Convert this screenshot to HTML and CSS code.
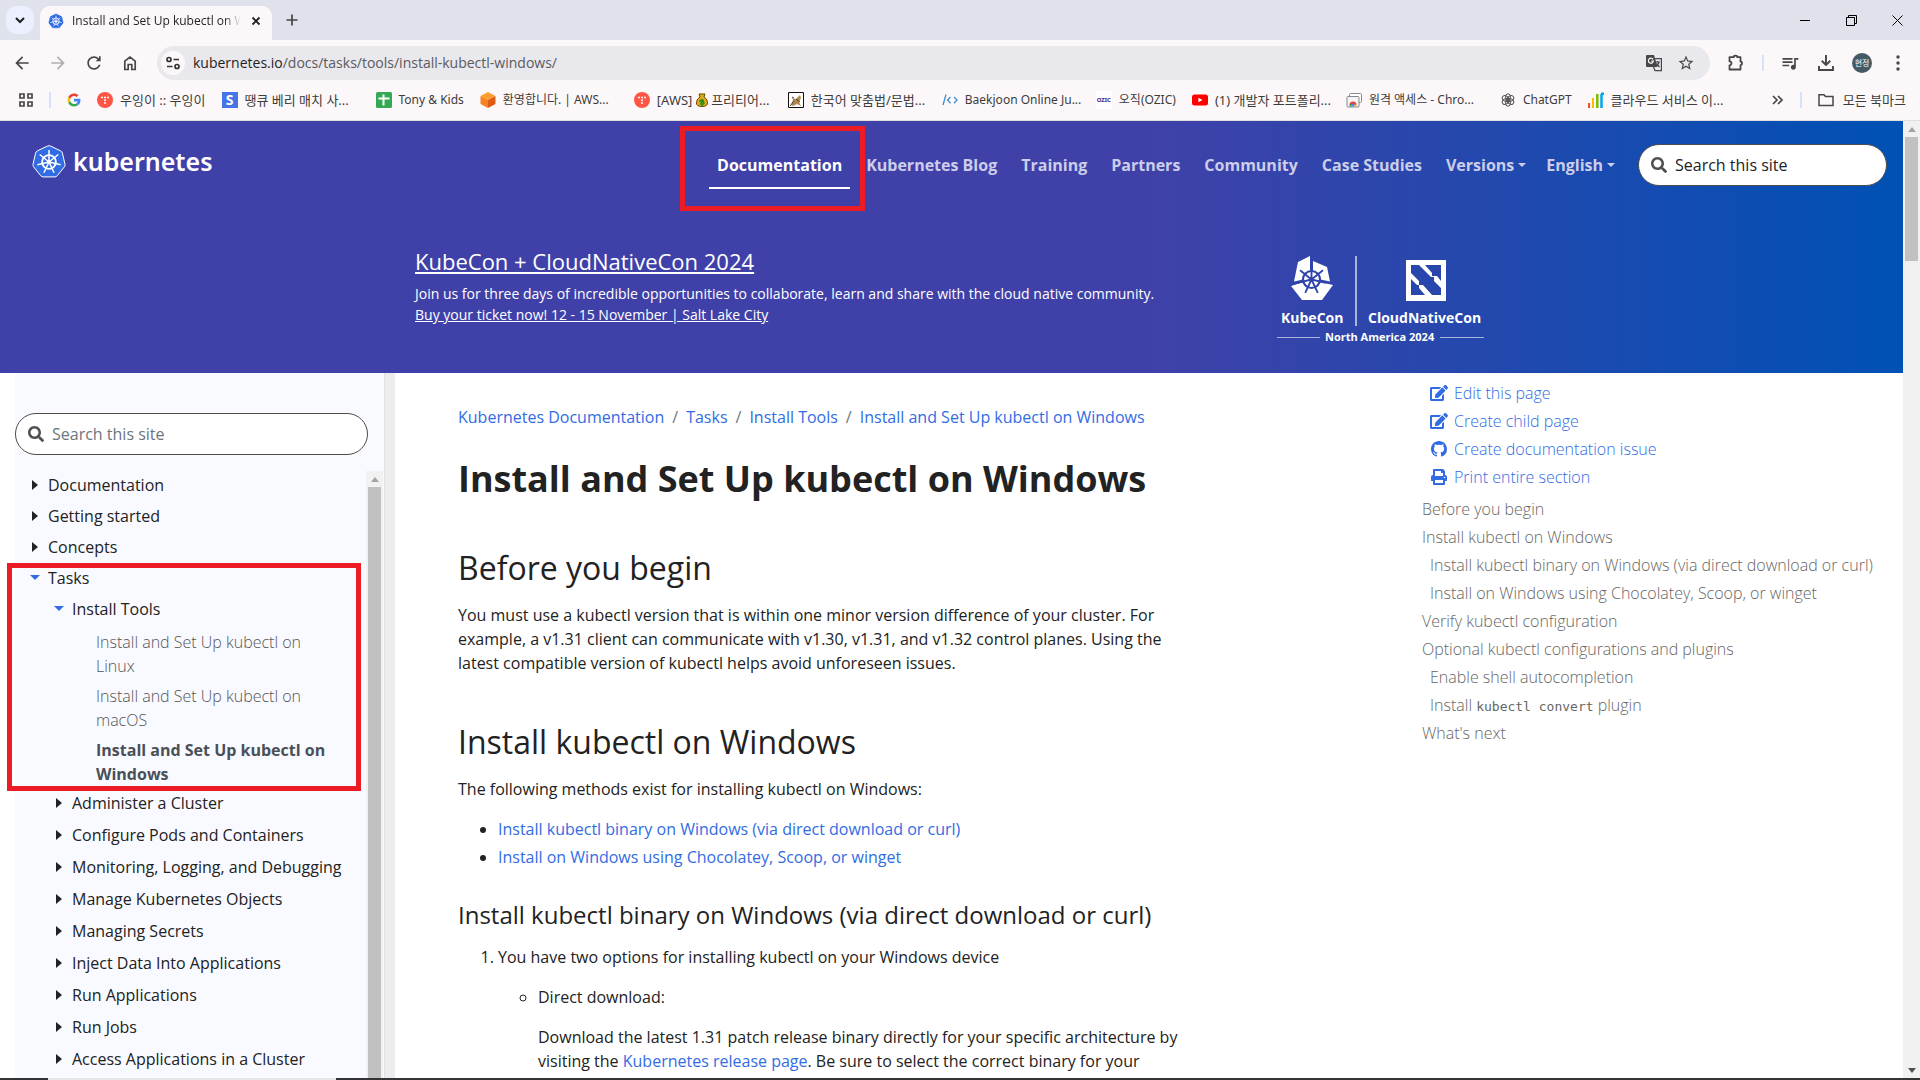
FILE: index.html
```
<!DOCTYPE html>
<html lang="en">
<head>
    <meta charset="utf-8">
    <meta name="viewport" content="width=device-width, initial-scale=1.0">
    <title>Install and Set Up kubectl on Windows</title>
    <link rel="stylesheet" href="styles.css">
</head>
<body>
    <!-- shared icons -->
    <svg class="sprite" aria-hidden="true">
        <symbol id="wheel" viewBox="-50 -50 100 100">
            <g fill="none" stroke="currentColor">
                <circle r="23" stroke-width="6"/>
                <path stroke-width="5" d="M0 0V-40M0 0L31 -25M0 0L39 9M0 0L17 36M0 0L-17 36M0 0L-39 9M0 0L-31 -25"/>
            </g>
            <circle r="6" fill="currentColor"/>
        </symbol>
        <symbol id="k8s" viewBox="0 0 34 33">
            <path fill="#326ce5" stroke="#fff" stroke-width="1" d="M15.4 1.1q1.6-.8 3.2 0L28.700 5.900q1.400.7 1.700 2.200l2.600 11.200q.3 1.400-.6 2.500l-7.100 8.900q-1 1.200-2.500 1.200H11.200q-1.500 0-2.500-1.200L1.600 21.800q-.9-1.100-.6-2.500L3.600 8.100q.3-1.500 1.700-2.200z"/>
            <use href="#wheel" x="2" y="2" width="30" height="30" color="#fff"/>
        </symbol>
        <symbol id="search" viewBox="0 0 512 512">
            <path fill="currentColor" d="M505 442.700L405.300 343c-4.500-4.500-10.600-7-17-7H372c27.600-35.300 44-79.700 44-128C416 93.100 322.900 0 208 0S0 93.100 0 208s93.100 208 208 208c48.300 0 92.700-16.400 128-44v16.300c0 6.400 2.500 12.500 7 17l99.700 99.700c9.400 9.400 24.600 9.400 33.900 0l28.300-28.300c9.400-9.400 9.400-24.600.1-34zM208 336c-70.700 0-128-57.200-128-128 0-70.700 57.200-128 128-128 70.700 0 128 57.200 128 128 0 70.700-57.200 128-128 128z"/>
        </symbol>
        <symbol id="edit" viewBox="0 0 576 512">
            <path fill="currentColor" d="M402.600 83.200l90.200 90.200c3.800 3.800 3.800 10 0 13.800L274.400 405.600l-92.800 10.300c-12.400 1.400-22.900-9.100-21.500-21.500l10.300-92.800L388.800 83.200c3.800-3.800 10-3.800 13.800 0zm162-22.900l-48.800-48.800c-15.200-15.200-39.900-15.200-55.200 0l-35.400 35.400c-3.800 3.800-3.800 10 0 13.800l90.200 90.200c3.800 3.800 10 3.800 13.800 0l35.400-35.400c15.200-15.300 15.200-40 0-55.200zM384 346.200V448H64V128h229.800c3.200 0 6.200-1.300 8.500-3.500l40-40c7.600-7.600 2.200-20.500-8.500-20.500H48C21.500 64 0 85.500 0 112v352c0 26.500 21.500 48 48 48h352c26.500 0 48-21.500 48-48V306.200c0-10.700-12.900-16-20.500-8.500l-40 40c-2.200 2.300-3.500 5.300-3.500 8.500z"/>
        </symbol>
        <symbol id="github" viewBox="0 0 16 16">
            <path fill="currentColor" d="M8 0C3.580 0 0 3.580 0 8c0 3.540 2.290 6.530 5.470 7.590.4.07.55-.17.55-.38 0-.19-.01-.82-.01-1.490-2.010.37-2.530-.49-2.690-.94-.09-.23-.48-.94-.82-1.130-.28-.15-.68-.52-.01-.53.63-.01 1.080.58 1.230.82.72 1.210 1.870.87 2.330.66.07-.52.28-.87.51-1.070-1.780-.2-3.640-.89-3.640-3.950 0-.87.31-1.590.82-2.150-.08-.2-.36-1.020.08-2.120 0 0 .67-.21 2.200.82.64-.18 1.320-.27 2-.27s1.360.09 2 .27c1.530-1.040 2.200-.82 2.200-.82.44 1.100.16 1.920.08 2.120.51.56.82 1.270.82 2.150 0 3.070-1.870 3.750-3.650 3.950.29.25.54.73.54 1.480 0 1.070-.01 1.930-.01 2.200 0 .21.15.46.55.38A8.010 8.010 0 0 0 16 8c0-4.420-3.580-8-8-8z"/>
        </symbol>
        <symbol id="print" viewBox="0 0 512 512">
            <path fill="currentColor" d="M448 192V77.250c0-8.490-3.370-16.620-9.370-22.630L393.370 9.370c-6-6-14.140-9.370-22.630-9.370H96C78.330 0 64 14.330 64 32v160c-35.350 0-64 28.650-64 64v112c0 8.840 7.160 16 16 16h48v96c0 17.670 14.330 32 32 32h320c17.670 0 32-14.330 32-32v-96h48c8.840 0 16-7.160 16-16V256c0-35.350-28.650-64-64-64zm-64 256H128v-96h256v96zm0-224H128V64h192v48c0 8.840 7.160 16 16 16h48v96zm48 72c-13.250 0-24-10.750-24-24 0-13.260 10.750-24 24-24s24 10.740 24 24c0 13.250-10.750 24-24 24z"/>
        </symbol>
        <symbol id="tistory" viewBox="0 0 16 16">
            <circle cx="8" cy="8" r="8" fill="#ff5544"/>
            <g fill="#fff"><circle cx="5" cy="5.500" r="1"/><circle cx="8" cy="5.500" r="1"/><circle cx="11" cy="5.500" r="1"/><circle cx="8" cy="8.300" r="1"/><circle cx="8" cy="11" r="1"/></g>
        </symbol>
    </svg>

    <!-- tab strip -->
    <div class="tabstrip">
        <button class="tab-search" aria-label="Search tabs"><svg width="10" height="8" viewBox="0 0 10 8"><path d="M1 2l4 4 4-4" fill="none" stroke="#1f1f1f" stroke-width="2"/></svg></button>
        <div class="tab">
            <svg class="icon16"><use href="#k8s"/></svg>
            <span class="tab-title">Install and Set Up kubectl on Windows</span>
            <button aria-label="Close tab"><svg width="10" height="10" viewBox="0 0 10 10"><path d="M1.500 1.500l7 7M8.500 1.500l-7 7" stroke="#1f1f1f" stroke-width="1.800"/></svg></button>
        </div>
        <button class="new-tab" aria-label="New tab"><svg width="12" height="12" viewBox="0 0 12 12"><path d="M6 0.500v11M0.500 6h11" stroke="#444" stroke-width="1.700"/></svg></button>
        <div class="window-buttons">
            <button aria-label="Minimize"><svg width="11" height="11" viewBox="0 0 11 11"><path d="M0 5.500h10" stroke="#000"/></svg></button>
            <button aria-label="Restore"><svg width="11" height="11" viewBox="0 0 11 11"><path d="M.5 2.500h8v8h-8zM2.500 2.500v-2h8v8h-2" fill="none" stroke="#000"/></svg></button>
            <button aria-label="Close"><svg width="11" height="11" viewBox="0 0 11 11"><path d="M.5.5l10 10M10.500.5l-10 10" stroke="#000"/></svg></button>
        </div>
    </div>

    <!-- address bar -->
    <div class="toolbar">
        <div class="nav-buttons">
            <button aria-label="Back"><svg class="icon20" viewBox="0 0 24 24"><path fill="#474747" d="M20 11H7.830l5.590-5.590L12 4l-8 8 8 8 1.410-1.410L7.830 13H20v-2z"/></svg></button>
            <button aria-label="Forward"><svg class="icon20" viewBox="0 0 24 24"><path fill="#b0aeb2" d="M4 13h12.170l-5.590 5.590L12 20l8-8-8-8-1.410 1.410L16.170 11H4v2z"/></svg></button>
            <button aria-label="Reload"><svg class="icon20" viewBox="0 0 24 24"><path fill="#474747" d="M17.650 6.350C16.200 4.900 14.210 4 12 4c-4.420 0-7.990 3.580-7.990 8s3.570 8 7.990 8c3.730 0 6.840-2.550 7.730-6h-2.080c-.82 2.330-3.040 4-5.650 4-3.310 0-6-2.690-6-6s2.690-6 6-6c1.660 0 3.140.69 4.220 1.780L14 10h6V4h-2v2.700z"/></svg></button>
            <button aria-label="Home"><svg class="icon20" viewBox="0 0 20 20"><path fill="none" stroke="#474747" stroke-width="1.700" d="M4.800 8.200L10 4l5.200 4.200v8.300h-3.400v-5H8.200v5H4.800z"/></svg></button>
        </div>
        <div class="omnibox">
            <button class="site-info" aria-label="Site information"><svg width="16" height="16" viewBox="0 0 16 16"><g fill="none" stroke="#333" stroke-width="1.700"><circle cx="4" cy="4.500" r="2"/><path d="M8.500 4.500H14M2 11.500h5.500"/><circle cx="12" cy="11.500" r="2"/></g></svg></button>
            <div class="url">kubernetes.io<span>/docs/tasks/tools/install-kubectl-windows/</span></div>
            <button aria-label="Translate"><svg width="18" height="18" viewBox="0 0 18 18"><path fill="#474747" d="M2 1h7l3.500 12H2q-1 0-1-1V2q0-1 1-1z"/><path fill="none" stroke="#fff" stroke-width="1.200" d="M8 5.300A2.500 2.500 0 1 0 8.400 7H6.200"/><path fill="none" stroke="#474747" stroke-width="1.200" d="M10 4.600h6.400v12H10l-1.500-3.500M10 8h5M12.500 7v1M14 8q-.8 3-3 4.500M11.500 9.500l3 3.500"/></svg></button>
            <button aria-label="Bookmark this tab"><svg width="18" height="18" viewBox="0 0 24 24"><path fill="#474747" d="M22 9.240l-7.190-.62L12 2 9.190 8.630 2 9.240l5.460 4.730L5.820 21 12 17.270 18.180 21l-1.630-7.030L22 9.240zM12 15.400l-3.760 2.270 1-4.280-3.320-2.880 4.380-.38L12 6.100l1.710 4.040 4.380.38-3.320 2.880 1 4.280L12 15.400z"/></svg></button>
        </div>
        <div class="toolbar-right">
            <button aria-label="Extensions"><svg class="icon20" viewBox="0 0 20 20"><path fill="none" stroke="#474747" stroke-width="1.800" stroke-linejoin="round" d="M3.500 4.200h4.200a1.800 1.500 0 0 1 3.600 0h3.200v4.300a1.500 1.800 0 0 1 0 3.600v4.400h-11v-4.200a2 2 0 0 0 0-4z"/></svg></button>
            <span class="divider"></span>
            <button aria-label="Media"><svg class="icon20" viewBox="0 0 24 24"><path fill="#474747" d="M15 6H3v2h12V6zm0 4H3v2h12v-2zM3 16h8v-2H3v2zM17 6v8.180c-.31-.11-.65-.18-1-.18-1.660 0-3 1.340-3 3s1.340 3 3 3 3-1.340 3-3V8h3V6h-5z"/></svg></button>
            <button aria-label="Downloads"><svg class="icon20" viewBox="0 0 20 20"><path fill="none" stroke="#474747" stroke-width="1.900" d="M10 2v10M5.700 7.800L10 12l4.300-4.200M3 13v4h14v-4"/></svg></button>
            <button class="avatar">현정</button>
            <button aria-label="Menu"><svg class="icon20" viewBox="0 0 20 20"><g fill="#474747"><circle cx="10" cy="4" r="1.700"/><circle cx="10" cy="10" r="1.700"/><circle cx="10" cy="16" r="1.700"/></g></svg></button>
        </div>
    </div>

    <!-- bookmarks -->
    <div class="bookmarks">
        <button aria-label="Apps"><svg width="14" height="14" viewBox="0 0 14 14"><path fill="none" stroke="#474747" stroke-width="1.700" d="M1 1h4v4H1zM9 1h4v4H9zM1 9h4v4H1zM9 9h4v4H9z"/></svg></button>
        <span class="divider"></span>
        <a class="bookmark only-icon" href="#" aria-label="Google"><svg width="14" height="14" viewBox="0 0 48 48"><path fill="#ea4335" d="M24 10c3.500 0 6.600 1.200 9 3.500l6-6C35.500 4 30.200 2 24 2 15.400 2 8 6.900 4.400 14.100l7 5.400C13.200 14 18.100 10 24 10z"/><path fill="#4285f4" d="M46 24.500c0-1.600-.2-3.100-.4-4.500H24v9h12.400c-.5 2.900-2.200 5.300-4.600 6.900l7.100 5.500C43.400 37.400 46 31.500 46 24.500z"/><path fill="#fbbc05" d="M11.400 28.500c-.5-1.400-.8-2.900-.8-4.500s.3-3.100.8-4.500l-7-5.400C2.900 17.100 2 20.400 2 24s.9 6.900 2.400 9.900z"/><path fill="#34a853" d="M24 46c6 0 11-2 14.900-4.600l-7.100-5.500C29.800 37.200 27.200 38 24 38c-5.900 0-10.800-4-12.600-9.500l-7 5.400C8 41.100 15.400 46 24 46z"/></svg></a>
        <a class="bookmark ko" href="#"><svg class="icon16"><use href="#tistory"/></svg><span>우잉이 :: 우잉이</span></a>
        <a class="bookmark long ko" href="#"><b class="letter-s">S</b><span>땡큐 베리 매치 사...</span></a>
        <a class="bookmark" href="#"><svg class="icon16" viewBox="0 0 16 16"><rect width="16" height="16" rx="1.500" fill="#34a853"/><path stroke="#fff" stroke-width="2" d="M2.500 6.500h11M7.500 2.500v11"/></svg><span>Tony &amp; Kids</span></a>
        <a class="bookmark long" href="#"><svg class="icon16" viewBox="0 0 16 16"><path fill="#ff9d30" d="M8 0l7.500 4L8 8 .5 4z"/><path fill="#f58220" d="M.5 4L8 8v8l-7.500-4z"/><path fill="#e05a18" d="M15.500 4L8 8v8l7.500-4z"/></svg><span>환영합니다. | AWS...</span></a>
        <a class="bookmark long ko" href="#"><svg class="icon16"><use href="#tistory"/></svg><span>[AWS] <svg class="money" width="12" height="14" viewBox="0 0 12 14"><path fill="#e0a81c" stroke="#6b4a00" d="M4 4L3 1h6L8 4c3 2 3.500 4 3.500 6 0 2.500-2 3.500-5.500 3.500S.5 12.500.5 10C.5 8 1 6 4 4z"/><path stroke="#1c8a1c" fill="none" stroke-width="1.300" d="M8 7.500q-4-1-4 .5t2 1 2 1.200-4 .6M6 6v7"/></svg> 프리티어...</span></a>
        <a class="bookmark long ko" href="#"><svg class="icon16" viewBox="0 0 16 16"><path fill="#fff" stroke="#111" d="M.5.5h15v15H.5z"/><path fill="#b08a4a" d="M3 13l2-5-1-2 4 1 4-4 1 3-2 4 2 4-4-2-4 2z"/><path stroke="#444" fill="none" d="M2 14l4-5M8 7l4 3M4 5l2 1"/></svg><span>한국어 맞춤법/문법...</span></a>
        <a class="bookmark long" href="#"><svg class="icon16" viewBox="0 0 16 16"><path fill="none" stroke="#3f8fd0" stroke-width="1.300" d="M4 2.500L1 13M8.500 5L5.500 8l3 3.200M12 5l3 3-3 3.200"/></svg><span>Baekjoon Online Ju...</span></a>
        <a class="bookmark" href="#"><b class="ozic">OZIC</b><span>오직(OZIC)</span></a>
        <a class="bookmark long ko" href="#"><svg class="icon16" viewBox="0 0 16 16"><rect y="2.500" width="16" height="11" rx="2.500" fill="#f00"/><path fill="#fff" d="M6.400 5.700v4.600L10.500 8z"/></svg><span>(1) 개발자 포트폴리...</span></a>
        <a class="bookmark long" href="#"><svg class="icon16" viewBox="0 0 16 16"><rect x="3.500" y="1.500" width="12" height="9" rx="1" fill="#fff" stroke="#888"/><rect x="1" y="4.500" width="12" height="10.500" rx="1" fill="#f4f4f4" stroke="#888"/><path fill="#ea4335" d="M3.500 13a3.500 3.500 0 0 1 7 0z"/><path fill="#34a853" d="M3.500 12.500h2v2.500h-1q-1-1-1-2.500z"/><path fill="#fbbc05" d="M8.500 12.500h2q0 1.500-1 2.500h-1z"/><circle cx="7" cy="13" r="1.600" fill="#4285f4"/></svg><span>원격 액세스 - Chro...</span></a>
        <a class="bookmark" href="#"><svg class="icon16" viewBox="0 0 16 16"><g fill="none" stroke="#555"><ellipse cx="8" cy="5.300" rx="2.600" ry="3.600"/><ellipse cx="8" cy="5.300" rx="2.600" ry="3.600" transform="rotate(60 8 8)"/><ellipse cx="8" cy="5.300" rx="2.600" ry="3.600" transform="rotate(120 8 8)"/><ellipse cx="8" cy="5.300" rx="2.600" ry="3.600" transform="rotate(180 8 8)"/><ellipse cx="8" cy="5.300" rx="2.600" ry="3.600" transform="rotate(240 8 8)"/><ellipse cx="8" cy="5.300" rx="2.600" ry="3.600" transform="rotate(300 8 8)"/></g></svg><span>ChatGPT</span></a>
        <a class="bookmark long ko" href="#"><svg class="icon16" viewBox="0 0 16 16"><path stroke="#f25022" stroke-width="2" d="M1 11v5"/><path stroke="#ffb900" stroke-width="2" d="M5 6v10"/><path stroke="#7fba00" stroke-width="2.500" d="M9.300 2v14"/><path stroke="#00a4ef" stroke-width="2.500" d="M13.500 2v14M13 1.700h3"/></svg><span>클라우드 서비스 이...</span></a>
        <button class="more" aria-label="More bookmarks"><svg width="12" height="10" viewBox="0 0 12 10"><path fill="none" stroke="#474747" stroke-width="1.700" d="M1 1l4 4-4 4M6 1l4 4-4 4"/></svg></button>
        <span class="divider"></span>
        <a class="bookmark ko all" href="#"><svg class="icon16" viewBox="0 0 16 16"><path fill="none" stroke="#474747" stroke-width="1.500" d="M1 2.800h5l1.500 1.700H15v9H1z"/></svg><span>모든 북마크</span></a>
    </div>

    <div class="viewport">
        <div class="page">
            <header class="hero">
                <nav class="navbar">
                    <a class="brand" href="#"><svg width="34" height="33"><use href="#k8s"/></svg><span>kubernetes</span></a>
                    <ul class="nav-links">
                        <li><a class="active" href="#">Documentation</a><div class="mark mark-nav"></div></li>
                        <li><a href="#">Kubernetes Blog</a></li>
                        <li><a href="#">Training</a></li>
                        <li><a href="#">Partners</a></li>
                        <li><a href="#">Community</a></li>
                        <li><a href="#">Case Studies</a></li>
                        <li class="dropdown"><a href="#">Versions</a></li>
                        <li class="dropdown"><a href="#">English</a></li>
                    </ul>
                    <label class="search top-search"><svg width="16" height="16"><use href="#search"/></svg><input type="search" placeholder="Search this site" aria-label="Search this site"></label>
                </nav>
                <section class="announcement">
                    <div class="announcement-text">
                        <h4><a href="#">KubeCon + CloudNativeCon 2024</a></h4>
                        <p>Join us for three days of incredible opportunities to collaborate, learn and share with the cloud native community.<br>
                        <a href="#">Buy your ticket now! 12 - 15 November | Salt Lake City</a></p>
                    </div>
                    <svg class="event-logo" width="208" height="90" viewBox="0 0 208 90">
                        <path fill="#fff" d="M33 0v22l-16 3.500L21 6zM36 5l14 6 3 14.500L36 22zM14 30l19-6 23 5-11 15H25z"/>
                        <circle cx="34.500" cy="23.500" r="9" fill="#fff"/>
                        <path stroke="#2f45ac" stroke-width="1.600" d="M14 28.500l12-3M56 27.500l-12-2.500M34.500 0v14"/>
                        <g color="#2f45ac"><use href="#wheel" x="16" y="5" width="37" height="37"/></g>
                        <text x="4" y="67" class="logo-text">KubeCon</text>
                        <path stroke="#a9b4dc" stroke-width="2" d="M79 0v70"/>
                        <path fill="#fff" fill-rule="evenodd" d="M129 4h40v41h-40zM134 9v30h30V9z"/>
                        <path fill="#fff" d="M142 9h6l7 8v3h5l4 5v7l-7-7v-4h-3zM134 17l8 8v4h4l9 10h-7l-6-7v-3h-2l-6-6z"/>
                        <text x="91" y="67" class="logo-text">CloudNativeCon</text>
                        <path stroke="#a9b4dc" d="M0 81.500h43M163 81.500h44"/>
                        <text x="48" y="85" class="logo-sub">North America 2024</text>
                    </svg>
                </section>
            </header>

            <div class="columns">
                <aside class="sidebar">
                    <label class="search"><svg width="16" height="16"><use href="#search"/></svg><input type="search" placeholder="Search this site" aria-label="Search this site"></label>
                    <div class="tree-wrap">
                        <ul class="tree">
                            <li><a href="#">Documentation</a></li>
                            <li><a href="#">Getting started</a></li>
                            <li><a href="#">Concepts</a></li>
                            <li class="open"><a href="#">Tasks</a>
                                <ul>
                                    <li class="open"><a href="#">Install Tools</a>
                                        <ul class="leaves">
                                            <li><a href="#">Install and Set Up kubectl on Linux</a></li>
                                            <li><a href="#">Install and Set Up kubectl on macOS</a></li>
                                            <li><a class="current" href="#">Install and Set Up kubectl on Windows</a></li>
                                        </ul>
                                    </li>
                                    <li><a href="#">Administer a Cluster</a></li>
                                    <li><a href="#">Configure Pods and Containers</a></li>
                                    <li><a href="#">Monitoring, Logging, and Debugging</a></li>
                                    <li><a href="#">Manage Kubernetes Objects</a></li>
                                    <li><a href="#">Managing Secrets</a></li>
                                    <li><a href="#">Inject Data Into Applications</a></li>
                                    <li><a href="#">Run Applications</a></li>
                                    <li><a href="#">Run Jobs</a></li>
                                    <li><a href="#">Access Applications in a Cluster</a></li>
                                </ul>
                            </li>
                        </ul>
                        <div class="scrollbar"><i class="arrow-up"></i><div class="thumb full"></div></div>
                    </div>
                    <div class="mark mark-tree"></div>
                </aside>

                <main class="content">
                    <ol class="breadcrumb">
                        <li><a href="#">Kubernetes Documentation</a></li>
                        <li><a href="#">Tasks</a></li>
                        <li><a href="#">Install Tools</a></li>
                        <li><a href="#">Install and Set Up kubectl on Windows</a></li>
                    </ol>
                    <h1>Install and Set Up kubectl on Windows</h1>
                    <h2>Before you begin</h2>
                    <p>You must use a kubectl version that is within one minor version difference of your cluster. For example, a v1.31 client can communicate with v1.30, v1.31, and v1.32 control planes. Using the latest compatible version of kubectl helps avoid unforeseen issues.</p>
                    <h2>Install kubectl on Windows</h2>
                    <p>The following methods exist for installing kubectl on Windows:</p>
                    <ul class="methods">
                        <li><a href="#">Install kubectl binary on Windows (via direct download or curl)</a></li>
                        <li><a href="#">Install on Windows using Chocolatey, Scoop, or winget</a></li>
                    </ul>
                    <h3>Install kubectl binary on Windows (via direct download or curl)</h3>
                    <ol class="steps">
                        <li><p>You have two options for installing kubectl on your Windows device</p>
                            <ul>
                                <li><p>Direct download:</p>
                                    <p>Download the latest 1.31 patch release binary directly for your specific architecture by visiting the <a href="#">Kubernetes release page</a>. Be sure to select the correct binary for your</p>
                                </li>
                            </ul>
                        </li>
                    </ol>
                </main>

                <aside class="toc">
                    <ul class="page-meta">
                        <li><a href="#"><svg width="18" height="16"><use href="#edit"/></svg>Edit this page</a></li>
                        <li><a href="#"><svg width="18" height="16"><use href="#edit"/></svg>Create child page</a></li>
                        <li><a href="#"><svg width="18" height="16"><use href="#github"/></svg>Create documentation issue</a></li>
                        <li><a href="#"><svg width="18" height="16"><use href="#print"/></svg>Print entire section</a></li>
                    </ul>
                    <ul class="toc-list">
                        <li><a href="#">Before you begin</a></li>
                        <li><a href="#">Install kubectl on Windows</a>
                            <ul>
                                <li><a href="#">Install kubectl binary on Windows (via direct download or curl)</a></li>
                                <li><a href="#">Install on Windows using Chocolatey, Scoop, or winget</a></li>
                            </ul>
                        </li>
                        <li><a href="#">Verify kubectl configuration</a></li>
                        <li><a href="#">Optional kubectl configurations and plugins</a>
                            <ul>
                                <li><a href="#">Enable shell autocompletion</a></li>
                                <li><a href="#">Install <code>kubectl convert</code> plugin</a></li>
                            </ul>
                        </li>
                        <li><a href="#">What's next</a></li>
                    </ul>
                </aside>
            </div>
        </div>
        <div class="scrollbar"><i class="arrow-up"></i><div class="thumb"></div><i class="arrow-down"></i></div>
    </div>

    <!-- top edge of the taskbar -->
    <div class="taskbar"><i></i></div>
</body>
</html>
```
FILE: styles.css
```
* {
    box-sizing: border-box;
}

body {
    margin: 0;
    height: 100vh;
    overflow: hidden;
    display: flex;
    flex-direction: column;
    background-color: #fff;
    color: #222;
    font-family: "Open Sans", "Noto Sans CJK KR", sans-serif;
    font-size: 16px;
    line-height: 24px;
}

ul, ol {
    margin: 0;
    padding: 0;
    list-style: none;
}

a {
    color: #326ce5;
    text-decoration: none;
}

button {
    display: flex;
    align-items: center;
    justify-content: center;
    flex: none;
    padding: 0;
    border: 0;
    background: none;
}

svg {
    flex: none;
}

.sprite {
    position: absolute;
    width: 0;
    height: 0;
}

.icon16 {
    width: 16px;
    height: 16px;
}

.icon20 {
    width: 20px;
    height: 20px;
}

.divider {
    flex: none;
    width: 2px;
    height: 16px;
    background-color: #d3e3fd;
}

/* tab strip */
.tabstrip {
    display: flex;
    flex: none;
    height: 40px;
    padding: 6px 0 0 6px;
    background-color: #dfe2eb;
}

.tab-search {
    width: 28px;
    height: 28px;
    border-radius: 10px;
    background-color: #ebeffe;
}

.tab {
    display: flex;
    align-items: center;
    width: 232px;
    margin-left: 6px;
    padding: 0 11px 4px 8px;
    border-radius: 10px 10px 0 0;
    background-color: #fcf8f9;
}

.tab-title {
    flex: 1;
    margin: 0 10px 0 8px;
    overflow: hidden;
    white-space: nowrap;
    font-family: "Open Sans", sans-serif;
    font-size: 12px;
    color: #1f1f1f;
    mask-image: linear-gradient(90deg, #000 90%, transparent);
}

.new-tab {
    width: 28px;
    height: 28px;
    margin-left: 6px;
}

.window-buttons {
    display: flex;
    height: 28px;
    margin-left: auto;
}

.window-buttons button {
    width: 46px;
}

/* address bar */
.toolbar {
    display: flex;
    align-items: center;
    flex: none;
    height: 46px;
    background-color: #fcf8f9;
}

.nav-buttons {
    display: flex;
    gap: 16px;
    padding: 0 17px 0 12px;
}

.omnibox {
    display: flex;
    align-items: center;
    flex: 1;
    gap: 14px;
    height: 34px;
    padding: 0 15px 0 4px;
    border-radius: 17px;
    background-color: #e9e8ed;
}

.site-info {
    width: 24px;
    height: 24px;
    border-radius: 12px;
    background-color: #fcf8f9;
}

.url {
    flex: 1;
    margin-left: -6px;
    font-family: "Open Sans", sans-serif;
    font-size: 14px;
    color: #1f1f1f;
}

.url span {
    color: #5a5a5f;
}

.toolbar-right {
    display: flex;
    align-items: center;
    gap: 16px;
    padding: 0 12px 0 16px;
}

.avatar {
    width: 20px;
    height: 20px;
    border-radius: 10px;
    background-color: #455a64;
    color: #fff;
    font-family: "Noto Sans CJK KR", sans-serif;
    font-size: 8px;
    line-height: 20px;
}

/* bookmarks bar */
.bookmarks {
    display: flex;
    align-items: center;
    flex: none;
    height: 35px;
    padding: 0 14px 6px 19px;
    border-bottom: 1px solid #e2dfe1;
    background-color: #fcf8f9;
}

.bookmarks .divider {
    margin: 0 16px;
}

.bookmark {
    display: flex;
    align-items: center;
    flex: none;
    gap: 7px;
    margin-right: 16px;
    color: #3c3c3c;
    font-family: "Noto Sans", "Noto Sans CJK KR", sans-serif;
    font-size: 12px;
    line-height: 18px;
    white-space: nowrap;
}

.bookmark.ko {
    font-size: 13px;
}

.bookmark.long {
    width: 138px;
}

.bookmark.all {
    gap: 9px;
    margin-right: 0;
}

.more {
    margin-left: auto;
}

.money {
    vertical-align: -2px;
}

.letter-s {
    width: 16px;
    height: 16px;
    background-color: #4474e8;
    color: #fff;
    font-size: 14px;
    line-height: 16px;
    text-align: center;
}

.ozic {
    width: 16px;
    background-color: #fff;
    color: #4a1d82;
    font-size: 6px;
    text-align: center;
}

/* page area */
.viewport {
    display: flex;
    flex: 1;
    min-height: 0;
}

.page {
    display: flex;
    flex: 1;
    flex-direction: column;
    min-width: 0;
    overflow: hidden;
}

.scrollbar {
    display: flex;
    flex: none;
    flex-direction: column;
    align-items: center;
    width: 17px;
    background-color: #f1f1f1;
}

.arrow-up, .arrow-down {
    margin: 6px 0 5px;
    border: 4px solid transparent;
    border-top-width: 0;
    border-bottom: 5px solid #a3a3a3;
}

.arrow-down {
    margin-top: auto;
    border-top: 5px solid #505050;
    border-bottom-width: 0;
}

.thumb {
    width: 13px;
    height: 124px;
    background-color: #c1c1c1;
}

.thumb.full {
    flex: 1;
}

/* hero */
.hero {
    flex: none;
    background: linear-gradient(90deg, #4041a8 60%, #0051b5 100%);
    color: #fff;
}

.navbar {
    display: flex;
    align-items: center;
    height: 88px;
    padding: 0 16px 0 32px;
}

.brand {
    display: flex;
    align-items: center;
    gap: 7px;
    margin-bottom: 8px;
    color: #fff;
    font-family: "Noto Sans", sans-serif;
    font-size: 25px;
    font-weight: 600;
}

.nav-links {
    display: flex;
    gap: 8px;
    margin-left: auto;
    margin-right: 19px;
}

.nav-links li {
    position: relative;
}

.nav-links a {
    display: block;
    padding: 12px 8px 10px;
    border-bottom: 2px solid transparent;
    color: #cccdea;
    font-weight: 700;
}

.nav-links a.active {
    border-color: #fff;
    color: #fff;
}

.nav-links .dropdown a {
    padding-right: 4px;
}

.dropdown a::after {
    content: "";
    display: inline-block;
    margin-left: 4px;
    vertical-align: 4px;
    border: 4px solid transparent;
    border-top-color: currentColor;
    border-bottom-width: 0;
}

.search {
    display: flex;
    align-items: center;
    gap: 8px;
    height: 42px;
    padding: 0 12px;
    border: 1px solid #4c4c4c;
    border-radius: 21px;
    background-color: #fff;
    color: #4f4f4f;
}

.search input {
    flex: 1;
    min-width: 0;
    padding: 0;
    border: 0;
    outline: 0;
    background: none;
    font: inherit;
}

.search input::placeholder {
    color: #6c757d;
    opacity: 1;
}

.top-search {
    width: 249px;
}

.top-search input::placeholder {
    color: #222;
}

.announcement {
    display: grid;
    grid-template-columns: 415fr 862fr 626fr;
    padding: 38px 0 27px;
}

.announcement-text {
    grid-column: 2;
}

.announcement a {
    color: #fff;
    text-decoration: underline;
}

.announcement h4 {
    margin: 0 0 8px;
    font-size: 22px;
    font-weight: 400;
    line-height: 28px;
}

.announcement p {
    margin: 0;
    font-size: 14px;
    line-height: 21px;
}

.event-logo {
    display: block;
    margin-top: 9px;
}

.logo-text {
    fill: #fff;
    font-family: "Open Sans", sans-serif;
    font-size: 14px;
    font-weight: 700;
}

.logo-sub {
    fill: #fff;
    font-family: "Open Sans", sans-serif;
    font-size: 11px;
    font-weight: 700;
}

/* columns */
.columns {
    display: flex;
    flex: 1;
    min-height: 0;
}

/* sidebar */
.sidebar {
    position: relative;
    display: flex;
    flex: none;
    flex-direction: column;
    width: 380px;
    margin-left: 15px;
    padding-top: 40px;
    border-right: 10px solid #ededee;
    background-color: #f9faff;
    box-shadow: inset -1px 0 #dee2e6;
}

.sidebar .search {
    flex: none;
    width: 353px;
}

.tree-wrap {
    display: flex;
    flex: 1;
    min-height: 0;
    margin-top: 16px;
    padding-right: 2px;
    overflow: hidden;
}

.tree {
    flex: 1;
    padding-left: 33px;
}

.tree a {
    display: block;
    padding: 2px 0 5px;
    color: #222;
    white-space: nowrap;
}

.tree ul {
    padding-left: 24px;
}

.tree ul a {
    padding-bottom: 6px;
}

.tree > li > a::before,
.tree > li > ul > li > a::before {
    content: "";
    float: left;
    width: 0;
    height: 0;
    margin: 7px 0 0 -16px;
    border: 5px solid transparent;
    border-left: 6px solid #222;
    border-right-width: 0;
}

.tree > li.open > a::before,
.tree > li > ul > li.open > a::before {
    margin: 9px 0 0 -18px;
    border: 5px solid transparent;
    border-top-color: #326ce5;
    border-bottom-width: 0;
}

.tree .leaves a {
    padding: 3px 30px 3px 0;
    color: #555;
    font-weight: 300;
    white-space: normal;
}

.tree .leaves a.current {
    color: #495057;
    font-weight: 700;
}

/* red highlight frames */
.mark {
    position: absolute;
    border: 5px solid #ed1c24;
    pointer-events: none;
}

.mark-nav {
    top: -15px;
    left: -29px;
    width: 185px;
    height: 85px;
}

.mark-tree {
    top: 190px;
    left: -8px;
    width: 354px;
    height: 228px;
}

/* article */
.content {
    flex: 1;
    min-width: 0;
    padding: 32px 63px 0;
}

.content h1, .content h2, .content h3, .content p {
    max-width: 734px;
    margin: 0 0 16px;
}

.content h1 {
    margin-bottom: 48px;
    font-size: 36px;
    font-weight: 700;
    line-height: 44px;
}

.content h2 {
    margin-bottom: 16px;
    font-size: 32px;
    font-weight: 400;
    line-height: 38px;
}

.content p + h2 {
    margin-top: 48px;
}

.content h3 {
    margin: 32px 0 16px;
    font-size: 24px;
    font-weight: 400;
    line-height: 28px;
}

.breadcrumb {
    display: flex;
    margin-bottom: 28px;
}

.breadcrumb li + li::before {
    content: "/";
    padding: 0 8px;
    color: #6c757d;
}

.methods {
    padding-left: 40px;
    list-style: disc;
}

.methods li {
    margin-bottom: 4px;
}

.steps {
    padding-left: 40px;
    list-style: decimal;
}

.steps ul {
    padding-left: 40px;
    list-style: circle;
}

.steps p {
    max-width: 660px;
}

/* right column */
.toc {
    flex: none;
    width: 481px;
    padding-top: 6px;
    font-weight: 300;
}

.page-meta {
    padding-left: 8px;
    margin-bottom: 4px;
}

.page-meta a {
    display: flex;
    align-items: center;
    gap: 6px;
}

.toc li a {
    padding: 2px 0;
}

.toc-list a {
    display: block;
    color: #666;
}

.toc-list ul {
    padding-left: 8px;
}

.toc code {
    font-family: "DejaVu Sans Mono", monospace;
    font-size: 13px;
    line-height: 16px;
}

/* taskbar edge */
.taskbar {
    flex: none;
    height: 2px;
    padding-left: 48px;
    background-color: #333338;
}

.taskbar i {
    display: block;
    width: 288px;
    height: 2px;
    background-color: #e6e6e6;
}
```
